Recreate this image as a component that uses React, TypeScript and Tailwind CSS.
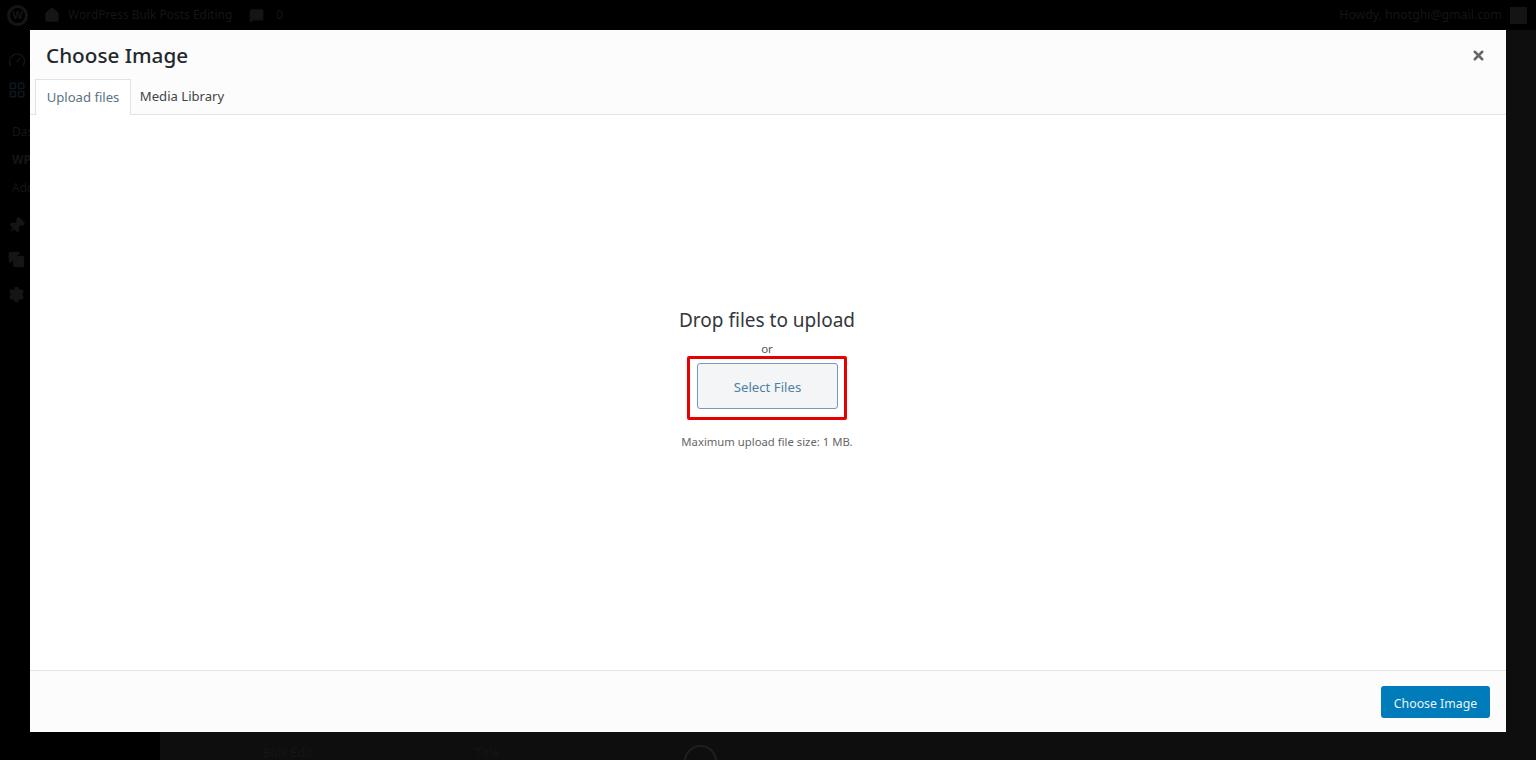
import { Gauge, Home, LayoutGrid, MessageSquare, Pin, Copy, Settings, X } from 'lucide-react'

const font = { fontFamily: '"Noto Sans", "Open Sans", sans-serif' }

const Backdrop = () => (
  <div className="flex h-[760px] w-[1536px] flex-col overflow-hidden bg-black text-[#151515]">
    {/* Admin bar */}
    <div className="flex h-[30px] shrink-0 items-center pl-[7px] pr-[9px] text-[12px]">
      <div className="flex h-[21px] w-[21px] items-center justify-center rounded-full border-[3px] border-[#151515] text-[11px] font-bold">W</div>
      <Home size={16} className="ml-[16px] fill-[#151515]" />
      <span className="ml-[8px] whitespace-nowrap">WordPress Bulk Posts Editing</span>
      <MessageSquare size={15} className="ml-[17px] fill-[#151515]" />
      <span className="ml-[12px]">0</span>
      <span className="ml-auto whitespace-nowrap text-[12.3px]">Howdy, hnotghi@gmail.com</span>
      <div className="ml-[8px] h-[17px] w-[17px] bg-[#141414]" />
    </div>
    <div className="flex min-h-0 flex-1">
      {/* Sidebar */}
      <div className="flex w-[160px] shrink-0 flex-col pl-[8px] pt-[21px] text-[12px] leading-[17px]">
        <Gauge size={18} className="text-[#141414]" />
        <LayoutGrid size={18} className="mt-[12px] text-[#0d171c]" />
        <span className="mt-[24px] pl-[4px]">Dashboard</span>
        <span className="mt-[11px] pl-[4px] font-bold">WP</span>
        <span className="mt-[11px] pl-[4px]">Add</span>
        <Pin size={17} className="mt-[21px] rotate-45 fill-[#151515]" />
        <Copy size={17} className="mt-[17px] fill-[#151515]" />
        <Settings size={17} className="mt-[18px] fill-[#151515]" />
      </div>
      {/* Main */}
      <div className="flex flex-1 items-end bg-[#0e0e0e] pl-[103px] text-[12px] leading-[14px]">
        <span className="w-[212px]">Bulk Edit</span>
        <span className="w-[209px]">Title</span>
        <div className="mb-[-18px] h-[33px] w-[33px] rounded-full border-2 border-[#1f1f1f]" />
      </div>
    </div>
  </div>
)

export default function App() {
  return (
    <div className="relative h-[760px] w-[1536px] overflow-hidden" style={font}>
      <Backdrop />

      {/* Modal */}
      <div className="absolute left-[30px] top-[30px] flex h-[702px] w-[1476px] flex-col bg-white">
        <div className="relative h-[85px] shrink-0 border-b border-[#e2e2e2] bg-[#fcfcfc]">
          <h1 className="pl-[16px] pt-[8px] text-[20.7px] font-medium leading-[34px] text-[#23282d]">Choose Image</h1>
          <button className="absolute right-[20px] top-[18px] text-[#666666]">
            <X size={15} strokeWidth={4} />
          </button>
          <div className="absolute bottom-[-1px] left-[5px] flex text-[13.1px] leading-[20px]">
            <div className="h-[36px] w-[96px] border border-b-0 border-[#e2e2e2] bg-white pt-[7px] text-center text-[#5a7285]">Upload files</div>
            <div className="h-[36px] w-[102px] pt-[7px] text-center text-[#444444]">Media Library</div>
          </div>
        </div>

        <div className="flex min-h-0 flex-1 flex-col items-center pr-[2px] pt-[191px]">
          <div className="text-[19px] leading-[28px] text-[#33383d]">Drop files to upload</div>
          <div className="mt-[8px] text-[11.5px] leading-[14px] text-[#555555]">or</div>
          <div className="rounded-[2px] border-[3px] border-[#e80000] pb-[8px] pl-[7px] pr-[6px] pt-[4px]">
            <button className="h-[46px] w-[141px] rounded-[3px] border border-[#6f9cc0] bg-[#f3f5f7] pt-[3px] text-[13.2px] text-[#4f7fa3]">Select Files</button>
          </div>
          <div className="mt-[14px] text-[11.3px] leading-[16px] text-[#666666]">Maximum upload file size: 1 MB.</div>
        </div>

        <div className="flex h-[62px] shrink-0 items-start justify-end border-t border-[#e6e6e6] bg-[#fcfcfc] pr-[16px] pt-[15px]">
          <button className="h-[32px] w-[109px] rounded-[3px] bg-[#007cba] pt-[4px] text-[12.3px] text-[#e8f3f9]">Choose Image</button>
        </div>
      </div>
    </div>
  )
}
